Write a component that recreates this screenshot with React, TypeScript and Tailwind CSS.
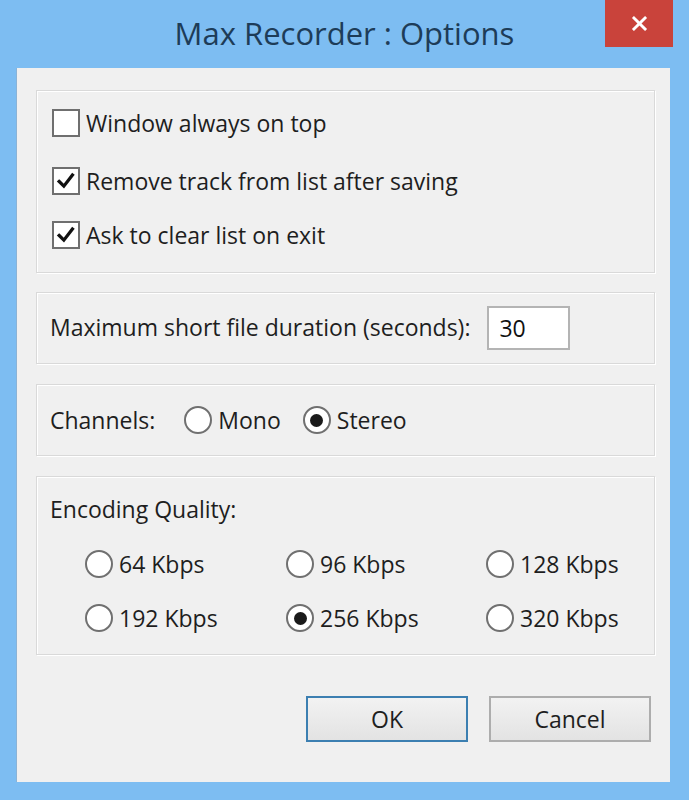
import React from 'react';

const font = { fontFamily: '"Open Sans", "Noto Sans", sans-serif' };

const Check = () => (
  <svg viewBox="0 0 28 28" className="w-full h-full">
    <path d="M6 14.5 L11.5 20 L21.5 7" fill="none" stroke="#111" strokeWidth="3.8" strokeLinecap="square" />
  </svg>
);

const CheckBox = ({ checked, label, className = '' }: { checked: boolean; label: string; className?: string }) => (
  <div className={`flex items-center leading-[28px] ${className}`}>
    <div className="w-[28px] h-[28px] border-2 border-[#6f6f6f] bg-white shrink-0">{checked && <Check />}</div>
    <span className="ml-[6px]">{label}</span>
  </div>
);

const Radio = ({ checked, label }: { checked: boolean; label: string }) => (
  <div className="flex items-center leading-[28px]">
    <div className="w-[28px] h-[28px] rounded-full border-2 border-[#707070] bg-white flex items-center justify-center shrink-0">
      {checked && <div className="w-[13px] h-[13px] rounded-full bg-[#1a1a1a]" />}
    </div>
    <span className="ml-[6px]">{label}</span>
  </div>
);

const Group = ({ className = '', children }: { className?: string; children: React.ReactNode }) => (
  <div className={`border border-[#d9d9d9] shadow-[inset_1px_1px_0_#ffffff,1px_1px_0_#ffffff] ${className}`}>{children}</div>
);

const RATES = ['64 Kbps', '96 Kbps', '128 Kbps', '192 Kbps', '256 Kbps', '320 Kbps'];

export default function App() {
  return (
    <div className="w-[689px] h-[800px] bg-[#7dbdf2] flex flex-col" style={font}>
      {/* Title bar */}
      <div className="relative h-[68px] shrink-0 flex items-center justify-center">
        <span className="text-[31px] text-[#1d3c58] -mt-[2px]">Max Recorder : Options</span>
        <div className="absolute right-[16px] top-0 w-[68px] h-[47px] bg-[#c9433b] flex items-center justify-center">
          <svg viewBox="0 0 18 16" className="w-[17px] h-[15px]">
            <path d="M2 1 L16 15 M16 1 L2 15" stroke="#ffffff" strokeWidth="3" fill="none" />
          </svg>
        </div>
      </div>

      {/* Client area */}
      <div className="ml-[16px] w-[654px] h-[714px] bg-[#f0f0f0] border-l border-[#8bb3d6] pl-[19px] pr-[15px] pt-[22px] text-[23px] text-[#1e1e1e] flex flex-col">
        <Group className="h-[183px] pl-[15px] pt-[18px]">
          <CheckBox checked={false} label="Window always on top" />
          <CheckBox checked label="Remove track from list after saving" className="mt-[30px]" />
          <CheckBox checked label="Ask to clear list on exit" className="mt-[26px]" />
        </Group>

        <Group className="mt-[19px] h-[72px] pl-[13px] flex items-center">
          <span className="-mt-[2px]">Maximum short file duration (seconds):</span>
          <div className="ml-[17px] w-[83px] h-[44px] bg-white border-2 border-[#b4b4b4] flex items-center pl-[10px] text-[#111]">30</div>
        </Group>

        <Group className="mt-[20px] h-[72px] pl-[13px] flex items-center">
          <span>Channels:</span>
          <div className="ml-[29px]">
            <Radio checked={false} label="Mono" />
          </div>
          <div className="ml-[22px]">
            <Radio checked label="Stereo" />
          </div>
        </Group>

        <Group className="mt-[20px] h-[179px] pl-[13px] pt-[18px]">
          <div className="leading-[28px]">Encoding Quality:</div>
          <div className="grid grid-cols-[201px_200px_160px] gap-y-[26px] pl-[35px] mt-[27px]">
            {RATES.map((r, i) => (
              <Radio key={r} checked={i === 4} label={r} />
            ))}
          </div>
        </Group>

        <div className="mt-[41px] flex justify-end gap-[21px] pr-[4px]">
          <button className="w-[162px] h-[46px] border-2 border-[#3c7fb1] bg-gradient-to-b from-[#f2f2f2] to-[#e3e3e3] text-[23px] text-[#1e1e1e]">OK</button>
          <button className="w-[162px] h-[46px] border-2 border-[#adadad] bg-gradient-to-b from-[#f2f2f2] to-[#e3e3e3] text-[23px] text-[#1e1e1e]">Cancel</button>
        </div>
      </div>
    </div>
  );
}
